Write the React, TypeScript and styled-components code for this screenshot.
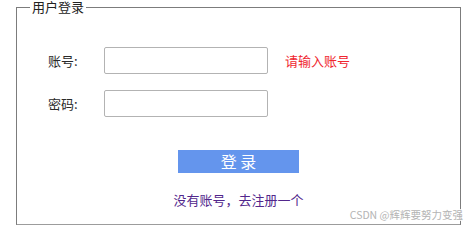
import styled, { createGlobalStyle } from 'styled-components';

const GlobalStyle = createGlobalStyle`
  html, body {
    margin: 0;
    padding: 0;
    background: #fff;
    overflow: hidden;
  }
  body {
    font-family: "Noto Sans CJK SC", "Noto Sans", sans-serif;
  }
`;

const Page = styled.div`
  position: relative;
  width: 474px;
  height: 225px;
`;

const Panel = styled.fieldset`
  box-sizing: border-box;
  width: 445px;
  margin: 0 0 0 16px;
  padding: 0 0 18px 0;
  border: 1px solid #7c7c7c;
  border-bottom: 2px solid #9c9c9c;
`;

const Title = styled.legend`
  margin-left: 13px;
  padding: 0 2px;
  font-size: 13px;
  line-height: 14px;
  color: #222;
`;

const Form = styled.form`
  display: flex;
  flex-direction: column;
  gap: 16px;
  padding-top: 33px;
  margin: 0;
`;

const Row = styled.div`
  display: flex;
  align-items: center;
  height: 27px;
  padding-left: 31px;
`;

const Label = styled.label`
  width: 56px;
  font-size: 13px;
  color: #2a2a2a;
`;

const Input = styled.input`
  box-sizing: border-box;
  width: 164px;
  height: 27px;
  margin: 0;
  border: 1px solid #b3b3b3;
  border-radius: 2px;
  outline: none;
  background: #fff;
`;

const ErrorText = styled.span`
  margin-left: 17px;
  font-size: 13px;
  color: #f0262f;
`;

const Actions = styled.div`
  display: flex;
  flex-direction: column;
  align-items: center;
  margin-top: 17px;
`;

const SubmitButton = styled.button`
  width: 121px;
  height: 23px;
  padding: 0;
  border: none;
  background: #6495ed;
  color: #fff;
  font-family: inherit;
  font-size: 16px;
  line-height: 23px;
  cursor: pointer;
`;

const RegisterLink = styled.a`
  margin-top: 20px;
  font-size: 13px;
  line-height: 13px;
  color: #52278c;
  text-decoration: none;
`;

const Watermark = styled.span`
  position: absolute;
  right: 10px;
  top: 209px;
  padding: 0 1px;
  font-size: 10.5px;
  line-height: 12px;
  color: #b4b4b4;
  background: rgba(255, 255, 255, 0.85);
`;

export default function App() {
  return (
    <Page>
      <GlobalStyle />
      <Panel>
        <Title>用户登录</Title>
        <Form onSubmit={(e) => e.preventDefault()}>
          <Row>
            <Label>账号:</Label>
            <Input type="text" />
            <ErrorText>请输入账号</ErrorText>
          </Row>
          <Row>
            <Label>密码:</Label>
            <Input type="password" />
          </Row>
          <Actions>
            <SubmitButton type="submit">登 录</SubmitButton>
            <RegisterLink href="#">没有账号，去注册一个</RegisterLink>
          </Actions>
        </Form>
      </Panel>
      <Watermark>CSDN @辉辉要努力变强</Watermark>
    </Page>
  );
}
